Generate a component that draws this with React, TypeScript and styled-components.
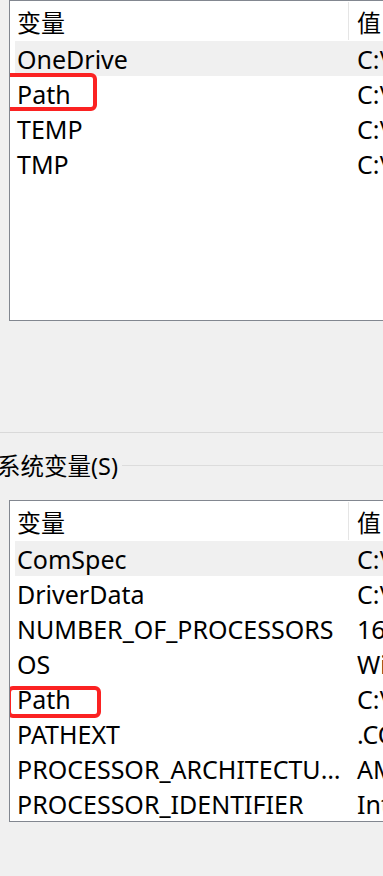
import styled, { createGlobalStyle } from 'styled-components';

const GlobalStyle = createGlobalStyle`
  html, body {
    margin: 0;
    padding: 0;
    background: #f0f0f0;
    overflow: hidden;
  }
  body {
    font-family: 'Noto Sans', 'Noto Sans CJK SC', sans-serif;
    color: #000;
  }
`;

interface EnvVar {
  name: string;
  value: string;
  marked?: boolean;
}

const userVars: EnvVar[] = [
  { name: 'OneDrive', value: 'C:\\Users\\Admin\\OneDrive' },
  { name: 'Path', value: 'C:\\Users\\Admin\\AppData\\Local\\Microsoft\\WindowsApps;', marked: true },
  { name: 'TEMP', value: 'C:\\Users\\Admin\\AppData\\Local\\Temp' },
  { name: 'TMP', value: 'C:\\Users\\Admin\\AppData\\Local\\Temp' },
];

const systemVars: EnvVar[] = [
  { name: 'ComSpec', value: 'C:\\Windows\\system32\\cmd.exe' },
  { name: 'DriverData', value: 'C:\\Windows\\System32\\Drivers\\DriverData' },
  { name: 'NUMBER_OF_PROCESSORS', value: '16' },
  { name: 'OS', value: 'Windows_NT' },
  { name: 'Path', value: 'C:\\Windows\\system32;C:\\Windows;', marked: true },
  { name: 'PATHEXT', value: '.COM;.EXE;.BAT;.CMD;.VBS;.VBE;.JS' },
  { name: 'PROCESSOR_ARCHITECTURE', value: 'AMD64' },
  { name: 'PROCESSOR_IDENTIFIER', value: 'Intel64 Family 6 Model 154 Stepping 3' },
];

const Page = styled.div`
  width: 100%;
  overflow: hidden;
`;

const ListBox = styled.div<{ $height: number; $top?: number }>`
  box-sizing: border-box;
  margin-left: 9px;
  margin-top: ${p => p.$top ?? 0}px;
  width: 560px;
  height: ${p => p.$height}px;
  border: 1px solid #828790;
  background: #fff;
  overflow: hidden;
`;

const HeaderRow = styled.div`
  display: flex;
  height: 40px;
  align-items: stretch;
`;

const HeaderCell = styled.div<{ $first?: boolean }>`
  display: flex;
  align-items: center;
  flex-shrink: 0;
  box-sizing: border-box;
  font-size: 24px;
  ${p =>
    p.$first
      ? `width: 339px; padding-left: 7px; border-right: 1px solid #e5e5e5; margin: 1px 0;`
      : `padding-left: 8px;`}
`;

const Row = styled.div<{ $selected?: boolean }>`
  position: relative;
  display: flex;
  align-items: center;
  height: 35px;
  margin-left: 5px;
  background: ${p => (p.$selected ? '#f0f0f0' : 'transparent')};
  font-size: 25px;
`;

const NameCell = styled.div`
  flex-shrink: 0;
  box-sizing: border-box;
  width: 334px;
  padding: 0 3px 0 2px;
  white-space: nowrap;
  overflow: hidden;
  text-overflow: ellipsis;
`;

const ValueCell = styled.div`
  flex-shrink: 0;
  padding-left: 8px;
  white-space: nowrap;
`;

const Marker = styled.div<{ $left: number; $top: number; $width: number; $height: number }>`
  position: absolute;
  left: ${p => p.$left}px;
  top: ${p => p.$top}px;
  width: ${p => p.$width}px;
  height: ${p => p.$height}px;
  box-sizing: border-box;
  border: 4px solid #fb2222;
  border-radius: 6px;
  pointer-events: none;
`;

const Separator = styled.div`
  height: 1px;
  background: #d9d9d9;
  margin-top: 111px;
`;

const GroupHeader = styled.div`
  display: flex;
  align-items: center;
  height: 30px;
  margin-top: 17px;
`;

const GroupLabel = styled.span`
  margin-left: -3px;
  font-size: 23.5px;
  white-space: nowrap;
`;

const GroupLine = styled.div`
  flex: 1;
  height: 1px;
  margin-left: 4px;
  background: #dcdcdc;
`;

const EnvList = ({
  vars,
  height,
  top,
  marker,
}: {
  vars: EnvVar[];
  height: number;
  top?: number;
  marker: { left: number; top: number; width: number; height: number };
}) => (
  <ListBox $height={height} $top={top}>
    <HeaderRow>
      <HeaderCell $first>变量</HeaderCell>
      <HeaderCell>值</HeaderCell>
    </HeaderRow>
    {vars.map((v, i) => (
      <Row key={v.name} $selected={i === 0}>
        <NameCell>{v.name}</NameCell>
        <ValueCell>{v.value}</ValueCell>
        {v.marked && <Marker $left={marker.left} $top={marker.top} $width={marker.width} $height={marker.height} />}
      </Row>
    ))}
  </ListBox>
);

export default function App() {
  return (
    <Page>
      <GlobalStyle />
      <EnvList vars={userVars} height={321} marker={{ left: -15, top: -3, width: 97, height: 38 }} />
      <Separator />
      <GroupHeader>
        <GroupLabel>系统变量(S)</GroupLabel>
        <GroupLine />
      </GroupHeader>
      <EnvList vars={systemVars} height={322} top={20} marker={{ left: -8, top: 5, width: 94, height: 32 }} />
    </Page>
  );
}
